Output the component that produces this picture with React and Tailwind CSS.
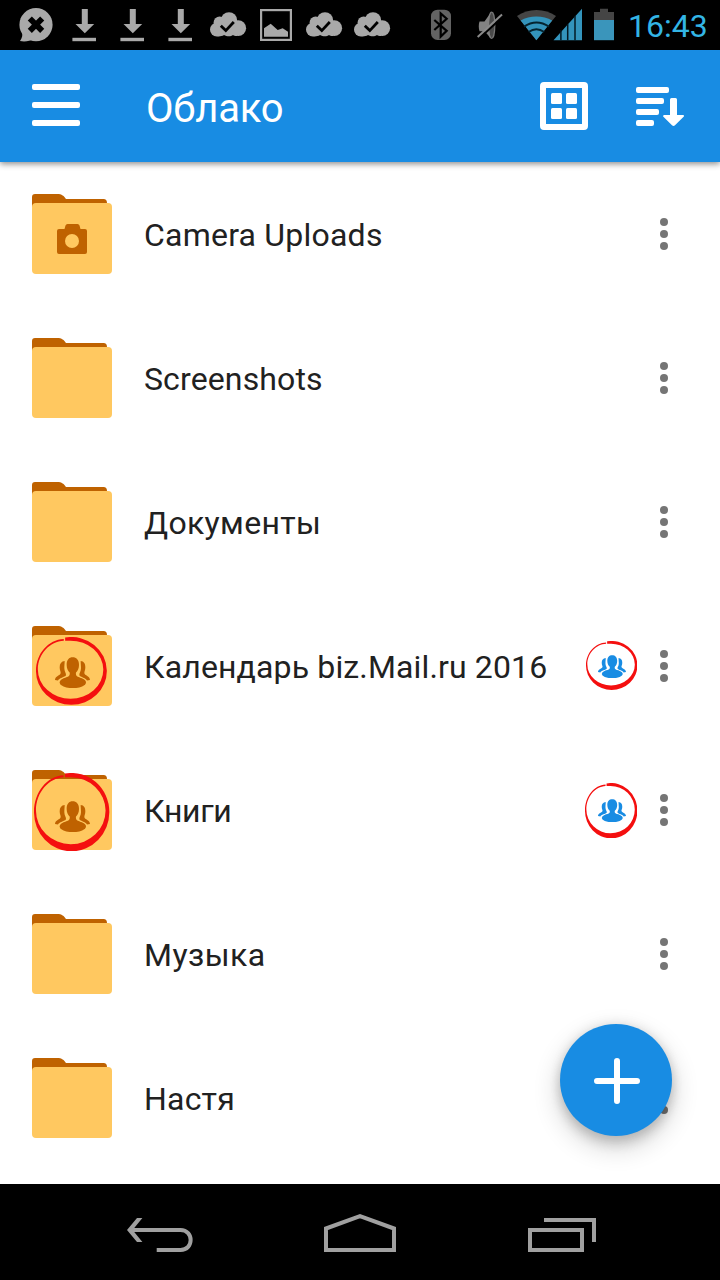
const folders = [
  { name: 'Camera Uploads', icon: 'camera', tracking: 'tracking-[0.22px]' },
  { name: 'Screenshots', tracking: 'tracking-[0.12px]' },
  { name: 'Документы', tracking: 'tracking-[0.33px]' },
  {
    name: 'Календарь biz.Mail.ru 2016',
    tracking: 'tracking-[0.14px]',
    shared: true,
    folderMark: 'left-[4px] top-[10.5px] w-[71px] h-[68px]',
    badgeMark: 'left-[-12.5px] top-[-13.5px] w-[51.5px] h-[49px]',
  },
  {
    name: 'Книги',
    tracking: 'tracking-[-0.3px]',
    shared: true,
    folderMark: 'left-[2px] top-[2.5px] w-[75.5px] h-[78.5px]',
    badgeMark: 'left-[-13.5px] top-[-16px] w-[52.5px] h-[55.5px]',
  },
  { name: 'Музыка', tracking: 'tracking-[0.45px]' },
  { name: 'Настя', tracking: 'tracking-[0.2px]' },
]

/* ---------- status bar ---------- */

function ChatIcon() {
  return (
    <svg className="w-12 h-[50px]" viewBox="0 0 48 50">
      <circle cx="24" cy="24.7" r="16.6" fill="#a9a9a9" />
      <path d="M10 31c1 4 0 7-2 10 5 1 10 0 14-2z" fill="#a9a9a9" />
      <path d="M17.8 18.500l12.400 12.400M30.200 18.500L17.800 30.900" stroke="#000" strokeWidth="5.800" />
    </svg>
  )
}

function DownloadIcon() {
  return (
    <svg className="w-12 h-[50px]" viewBox="0 0 48 50" fill="#a9a9a9">
      <path d="M21.8 9h6v15h6.4l-9.4 9.2L15.5 24h6.3z" />
      <path d="M12.4 37.8H36V41.2H12.4z" />
    </svg>
  )
}

function CloudIcon() {
  return (
    <svg className="w-12 h-[50px]" viewBox="0 0 48 50">
      <g fill="#a9a9a9">
        <circle cx="12.8" cy="29.6" r="6.8" />
        <circle cx="15.6" cy="22.6" r="6" />
        <circle cx="25" cy="20.4" r="8.2" />
        <circle cx="34.2" cy="28.2" r="7.9" />
        <path d="M13 24h20v12c-2 0-3-.3-4-1-2 1.600-6 1.800-9 0-2 1.400-5 1.600-7 1.300z" />
      </g>
      <path d="M16.800 25.800l5 4.800 8-8.600" fill="none" stroke="#000" strokeWidth="2.800" />
    </svg>
  )
}

function ImageIcon() {
  return (
    <svg className="w-12 h-[50px]" viewBox="0 0 48 50">
      <rect x="9.100" y="10.100" width="29.800" height="29.800" fill="none" stroke="#a9a9a9" strokeWidth="2.200" />
      <path d="M12 36.800v-8.500l6.700-4.600 7 6.300 5-1.700 5.300 3.400v5.100z" fill="#a9a9a9" />
    </svg>
  )
}

function BluetoothIcon() {
  return (
    <svg className="w-12 h-[50px]" viewBox="0 0 48 50">
      <rect x="14" y="9.700" width="20" height="30.300" rx="6.500" fill="#636363" />
      <path d="M17.300 20l12.400 10.800-6 5.800V13.400l6 5.400L17.300 30" fill="none" stroke="#000" strokeWidth="2.200" />
    </svg>
  )
}

function MuteIcon() {
  return (
    <svg className="w-12 h-[50px]" viewBox="0 0 48 50">
      <ellipse cx="26.600" cy="25.300" rx="3.200" ry="13.200" fill="#4a4a4a" stroke="#777" strokeWidth="1.200" />
      <path d="M14.500 21.500h5l6.500-9.300c-2.500 7-2.500 19 0 26l-6.500-7h-5c-1-3-1-7 0-9.700z" fill="#828282" />
      <path d="M14 38.500L38.500 16" stroke="#000" strokeWidth="2.200" />
      <path d="M12.700 37L37 14.600" stroke="#8a8a8a" strokeWidth="2" />
    </svg>
  )
}

function SignalIcon() {
  return (
    <svg className="w-[66px] h-[50px]" viewBox="517 0 66 50">
      <path d="M536.400 40.300L517 15.900c11-8 28-8 39 0z" fill="#454545" />
      <path d="M536.400 40.300L520.600 20.500c9-5.300 22.600-5.300 31.600 0z" fill="#3394bc" />
      <path d="M524 26.600c8-5.300 17-5.300 25 0M528.600 32c5-3.600 10.600-3.600 15.600 0" fill="none" stroke="#052430" strokeWidth="2" />
      <path d="M553.500 40.300L582 8.700v31.600z" fill="#3394bc" />
      <path d="M560.900 30v10.300M567.700 24v16.300M575 16v24.300" stroke="#031a24" strokeWidth="1.500" />
    </svg>
  )
}

function BatteryIcon() {
  return (
    <svg className="ml-[11px] w-5 h-[50px]" viewBox="0 0 20 50">
      <path d="M6 8.800h8V12h6v8.200H0V12h6z" fill="#454545" />
      <path d="M0 20h20v20.200H0z" fill="#3a95bb" />
    </svg>
  )
}

function StatusBar() {
  return (
    <div className="h-[50px] shrink-0 bg-black flex items-center pl-3 pr-[11px]">
      <ChatIcon />
      <DownloadIcon />
      <DownloadIcon />
      <DownloadIcon />
      <CloudIcon />
      <ImageIcon />
      <CloudIcon />
      <CloudIcon />
      <div className="ml-auto flex items-center">
        <BluetoothIcon />
        <MuteIcon />
        <span className="w-1" />
        <SignalIcon />
        <BatteryIcon />
        <span className="ml-[14px] w-[81px] pt-0.5 text-[32px] leading-[50px] text-[#33b5e5] whitespace-nowrap">16:43</span>
      </div>
    </div>
  )
}

/* ---------- app bar ---------- */

function AppBar() {
  return (
    <header className="relative z-10 h-28 shrink-0 bg-[#188ce3] flex items-center pl-8 pr-9 shadow-[0_2px_6px_rgba(0,0,0,0.45)]">
      <button className="flex flex-col gap-3 w-12 -mt-0.5">
        <span className="h-1.5 rounded-xs bg-white" />
        <span className="h-1.5 rounded-xs bg-white" />
        <span className="h-1.5 rounded-xs bg-white" />
      </button>
      <h1 className="ml-[66px] mt-1.5 text-[40px] leading-none tracking-[-0.2px] text-white">Облако</h1>
      <button className="ml-auto">
        <svg className="w-12 h-12" viewBox="0 0 48 48" fill="#fff">
          <rect x="3" y="3" width="42" height="42" rx="1" fill="none" stroke="#fff" strokeWidth="6" strokeLinejoin="round" />
          <rect x="11" y="11" width="11" height="11" rx="1.500" />
          <rect x="26" y="11" width="11" height="11" rx="1.500" />
          <rect x="11" y="26" width="11" height="11" rx="1.500" />
          <rect x="26" y="26" width="11" height="11" rx="1.500" />
        </svg>
      </button>
      <button className="ml-12">
        <svg className="w-12 h-12" viewBox="0 0 48 48" fill="#fff">
          <rect x="0" y="5" width="33" height="6" rx="2" />
          <rect x="0" y="16" width="28" height="6" rx="2" />
          <rect x="0" y="27" width="23" height="6" rx="2" />
          <rect x="0" y="38" width="18" height="6" rx="2" />
          <path d="M34 17.500q0-1.500 1.500-1.500h4q1.500 0 1.500 1.500V33h6q1.800.5.600 1.800L39 43.300q-1.500 1.300-3 0l-8.600-8.500Q26.500 33.500 28 33h6z" />
        </svg>
      </button>
    </header>
  )
}

/* ---------- folder list ---------- */

function PeopleIcon({ className }) {
  return (
    <svg className={className} viewBox="0 0 105 95" preserveAspectRatio="none" fill="currentColor">
      <ellipse cx="53.500" cy="77" rx="39.500" ry="17" />
      <path d="M53 1C42 1 35 9 35 24c0 11 4 18 9 23 1 5 0 9-4 12-8 4-14 5-20 9h66c-6-4-11-5-19-9-4-3-5-7-4-12 5-5 9-12 9-23C72 9 64 1 53 1z" />
      <path d="M29 12c-10 1-15 8-15 19 0 9 3 12 3 17C16 56 0 57 0 69l9 2c2-8 21-10 24-16 1-6-5-11-5-21 0-10 1-14 1-22z" />
      <path d="M77 12c10 1 14 8 14 19 0 9-3 12-3 17 1 8 17 9 17 21l-9 2c-2-8-20-10-23-16-1-6 5-11 5-21 0-10-1-14-1-22z" />
    </svg>
  )
}

// Hand-drawn red ring, thin on the left and heavy at the bottom right
function RedMark({ className }) {
  return (
    <svg className={`absolute max-w-none ${className}`} viewBox="48 80 212 205" preserveAspectRatio="none" fill="#f40f0f">
      <path d="M135 81.500A106 102 0 0 1 259.500 182A106 102 0 0 1 153.500 284.500A106 102 0 0 1 48 182C48 130 85 88 131 86V91C90 93 53.500 130 53.500 178A98 88 0 0 0 151 266A98 88 0 0 0 249 178A98 88 0 0 0 151 91L135 91Z" />
    </svg>
  )
}

function FolderIcon({ icon, shared, mark }) {
  return (
    <div className="relative w-20 h-20 shrink-0">
      <svg className="w-20 h-20" viewBox="0 0 80 80">
        <path d="M0 14V3q0-3 3-3h22c5 0 7 2 9 5h37.500q3.500 0 3.500 4v5z" fill="#bf6200" />
        <rect y="9" width="80" height="71" rx="4" fill="#ffc860" />
        {icon === 'camera' && (
          <>
            <path d="M27 35h5.500l1-3.500q.5-1.500 2-1.500h10q1.500 0 2 1.500l1 3.500H53q2 0 2 2v21q0 2-2 2H27q-2 0-2-2V37q0-2 2-2z" fill="#bf6200" />
            <circle cx="40" cy="47" r="7" fill="#ffc860" />
          </>
        )}
      </svg>
      {shared && <PeopleIcon className="absolute left-[23px] top-[30.5px] w-[35px] h-[31.5px] text-[#bf6200]" />}
      {mark && <RedMark className={mark} />}
    </div>
  )
}

function FolderRow({ folder }) {
  return (
    <li className="h-36 flex items-center pl-8 pr-[52px]">
      <FolderIcon icon={folder.icon} shared={folder.shared} mark={folder.folderMark} />
      <span className={`ml-8 flex-1 pt-0.5 text-[32px] leading-none text-[#212121] whitespace-nowrap ${folder.tracking}`}>
        {folder.name}
      </span>
      {folder.shared && (
        <div className="relative mr-[34px] mt-px shrink-0">
          <PeopleIcon className="w-7 h-[23.5px] text-[#188ce3]" />
          <RedMark className={folder.badgeMark} />
        </div>
      )}
      <button className="flex flex-col gap-1 shrink-0">
        <span className="w-2 h-2 rounded-full bg-[#757575]" />
        <span className="w-2 h-2 rounded-full bg-[#757575]" />
        <span className="w-2 h-2 rounded-full bg-[#757575]" />
      </button>
    </li>
  )
}

/* ---------- system navigation ---------- */

function NavBar() {
  return (
    <nav className="h-24 shrink-0 bg-black flex items-start pt-[29px] pl-[127px]">
      <svg className="w-[67px] h-10" viewBox="0 0 67 40" fill="none" stroke="#a0a0a0" strokeWidth="4">
        <path d="M4 17h49.500c13.500 0 13.500 20 0 20H29.700" />
        <path d="M10 5h5.400L5.600 17l9.800 12H10L0 17z" fill="#a0a0a0" stroke="none" />
      </svg>
      <svg className="ml-[130px] w-[72px] h-10" viewBox="0 0 72 40" fill="none" stroke="#a0a0a0" strokeWidth="4">
        <path d="M2 37V15.500L36 3.200l34 12.300V37z" />
      </svg>
      <svg className="ml-[132px] w-[68px] h-10" viewBox="0 0 68 40" fill="none" stroke="#a0a0a0" strokeWidth="4">
        <path d="M2 17h52v20H2z" />
        <path d="M16 7h50v22" />
      </svg>
    </nav>
  )
}

export default function App() {
  return (
    <div className="w-[720px] h-[1280px] flex flex-col overflow-hidden bg-white font-[Roboto,sans-serif]">
      <StatusBar />
      <AppBar />
      <main className="relative flex-1 min-h-0 overflow-hidden">
        <ul>
          {folders.map((folder) => (
            <FolderRow key={folder.name} folder={folder} />
          ))}
        </ul>
        <button className="absolute right-12 bottom-12 w-28 h-28 rounded-full bg-[#188ce3] shadow-[0_10px_24px_4px_rgba(0,0,0,0.14),0_8px_12px_rgba(0,0,0,0.14),0_0_12px_rgba(0,0,0,0.1)]">
          <svg className="w-28 h-28" viewBox="0 0 112 112" stroke="#fff" strokeWidth="6" strokeLinecap="round">
            <path d="M37 57h40M57 37v40" />
          </svg>
        </button>
      </main>
      <NavBar />
    </div>
  )
}
